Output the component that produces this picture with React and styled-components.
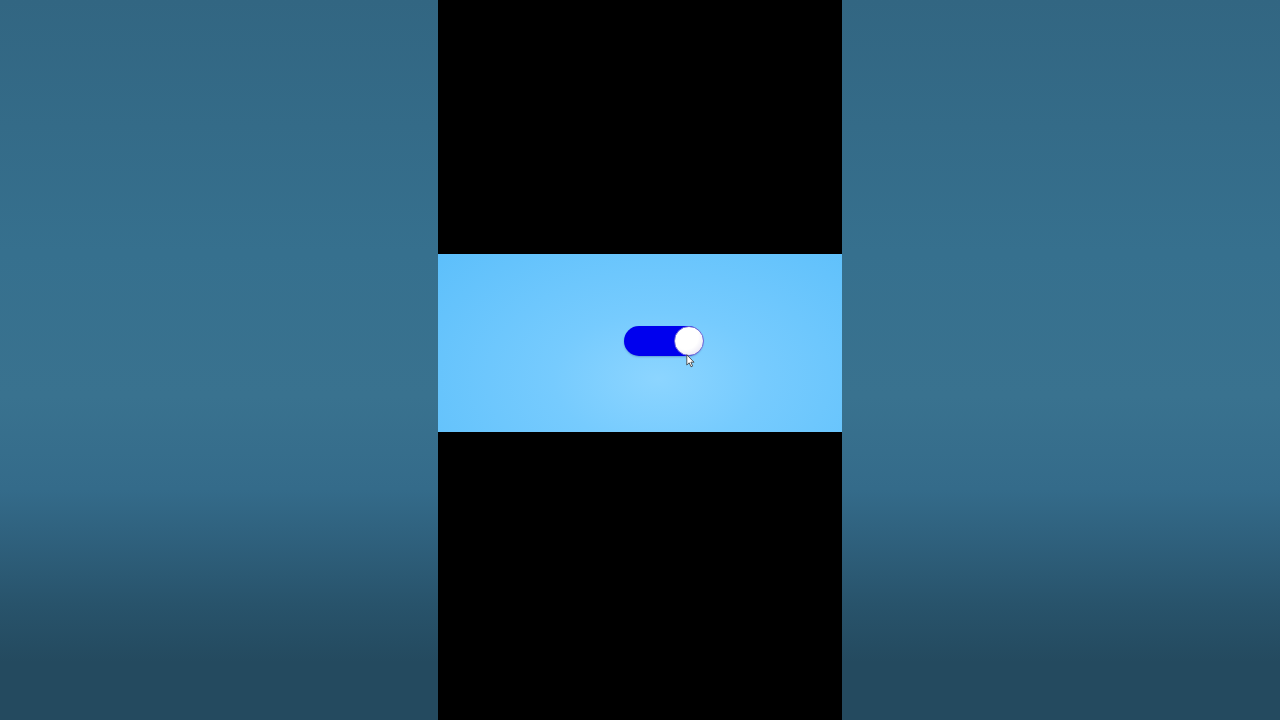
import styled, { createGlobalStyle } from "styled-components";

const GlobalStyle = createGlobalStyle`
  html, body {
    margin: 0;
    padding: 0;
    width: 1280px;
    height: 720px;
    overflow: hidden;
    font-family: "Liberation Sans", Arial, sans-serif;
  }
`;

const Page = styled.div`
  display: grid;
  grid-template-columns: 438px 404px 1fr;
  width: 1280px;
  height: 720px;
`;

const Side = styled.div`
  background: linear-gradient(
    180deg,
    #326682 0%,
    #36708e 35%,
    #39728f 55%,
    #346b8a 68%,
    #2e5f7b 76%,
    #28536b 84%,
    #244a5f 92%,
    #244a5f 100%
  );
`;

const Column = styled.div`
  display: flex;
  flex-direction: column;
  background: #000;
`;

const Letterbox = styled.div`
  height: ${(p) => p.h}px;
  background: #000;
  flex-shrink: 0;
`;

const Stage = styled.div`
  height: 178px;
  flex-shrink: 0;
  display: flex;
  align-items: flex-start;
  padding: 72px 0 0 186px;
  box-sizing: border-box;
  background: radial-gradient(
    ellipse 300px 190px at 220px 125px,
    #8cd5ff 0%,
    #76cbfe 35%,
    #5cbffb 100%
  );
`;

const Switch = styled.div`
  position: relative;
  width: 79px;
  height: 30px;
  border-radius: 15px;
  background: #0000ee;
  display: flex;
  justify-content: flex-end;
  box-shadow: 0 1px 2px rgba(0, 0, 80, 0.25);
`;

const Knob = styled.div`
  width: 28px;
  height: 28px;
  border-radius: 50%;
  background: radial-gradient(
    circle at 38% 35%,
    #ffffff 50%,
    #f2f0f8 70%,
    #d8d4e8 100%
  );
  border: 1.5px solid #6f68d8;
  margin-top: -0.5px;
  margin-right: -1px;
`;

const Pointer = styled.svg`
  position: absolute;
  left: 62px;
  top: 28px;
  width: 9px;
  height: 14px;
`;

export default function App() {
  return (
    <>
      <GlobalStyle />
      <Page>
        <Side />
        <Column>
          <Letterbox h={254} />
          <Stage>
            <Switch>
              <Knob />
              <Pointer viewBox="0 0 9 14">
                <path
                  d="M0.8 0.8 L0.8 11 L3.2 8.8 L5 12.8 L6.6 12.1 L4.9 8.2 L8 8.2 Z"
                  fill="#ffffff"
                  stroke="#333"
                  strokeWidth="0.8"
                  strokeLinejoin="round"
                />
              </Pointer>
            </Switch>
          </Stage>
          <Letterbox h={288} />
        </Column>
        <Side />
      </Page>
    </>
  );
}
